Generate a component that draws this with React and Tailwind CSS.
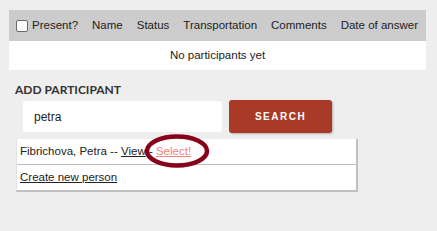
export default function App() {
  const cols = ["Name", "Status", "Transportation", "Comments", "Date of answer"];
  return (
    <div
      className="w-[437px] h-[231px] bg-[#eeeeee] pt-[10px] text-[#222222] overflow-hidden"
      style={{ fontFamily: '"Liberation Sans", Arial, sans-serif' }}
    >
      <div className="ml-[9px] w-[417px]">
        <div className="h-[31px] bg-[#cccccc] flex items-center pl-[7px] gap-[14px] text-[11.5px]">
          <div className="flex items-center gap-[4px]">
            <span className="w-[12px] h-[12px] border border-[#6b6b6b] rounded-[2px] bg-[#fafafa] inline-block" />
            <span>Present?</span>
          </div>
          {cols.map((c) => (
            <span key={c}>{c}</span>
          ))}
        </div>
        <div className="h-[29px] bg-white flex items-center justify-center text-[11.5px]">
          No participants yet
        </div>
      </div>

      <div
        className="ml-[15px] mt-[13px] text-[12px] leading-[14px] font-bold text-[#333333]"
        style={{ fontFamily: 'Lato, "Liberation Sans", sans-serif' }}
      >
        ADD PARTICIPANT
      </div>

      <div className="ml-[23px] mt-[3px] flex items-center gap-[7px]">
        <div className="w-[199px] h-[31px] bg-white rounded-[3px] flex items-center pl-[11px] text-[12px]">
          petra
        </div>
        <div className="w-[103px] h-[33px] bg-[#a93a27] rounded-[3px] shadow-[1px_1px_2px_rgba(0,0,0,0.25)] flex items-center justify-center text-white font-bold text-[10px] tracking-[1.5px]">
          SEARCH
        </div>
      </div>

      <div className="ml-[16px] mt-[6px] w-[342px] bg-white border-l border-l-[#e2e2e2] border-r-2 border-b-2 border-r-[#c0c0c0] border-b-[#c0c0c0] text-[11.5px]">
        <div className="relative h-[26px] flex items-center pl-[3px] border-b border-[#bdbdbd]">
          <span>
            Fibrichova, Petra -- <span className="underline">View</span> -{" "}
            <span className="underline text-[#f47f7f]">Select!</span>
          </span>
          <svg
            className="absolute left-[127px] top-[-5px]"
            width="68"
            height="36"
            viewBox="0 0 68 36"
          >
            <ellipse cx="33" cy="17" rx="30" ry="14.5" fill="none" stroke="#880019" strokeWidth="4.5" />
          </svg>
        </div>
        <div className="h-[25px] flex items-center pl-[3px]">
          <span className="underline">Create new person</span>
        </div>
      </div>
    </div>
  );
}
